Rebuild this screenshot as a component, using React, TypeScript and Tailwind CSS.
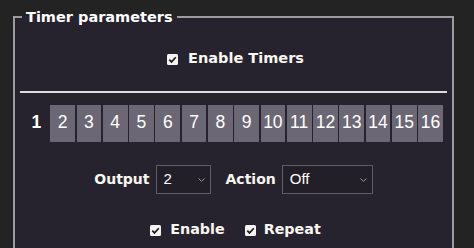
import React from "react";

const tabs = Array.from({ length: 16 }, (_, i) => i + 1);

const Check = () => (
  <svg width="11" height="11" viewBox="0 0 11 11" className="shrink-0">
    <rect x="0" y="0" width="11" height="11" rx="1.5" fill="#f4f4f4" />
    <path d="M2.3 5.6 L4.5 7.9 L8.8 3.2" fill="none" stroke="#1e1e1e" strokeWidth="1.7" />
  </svg>
);

const Chevron = () => (
  <svg width="7" height="4" viewBox="0 0 7 4">
    <path d="M0.5 0.5 L3.5 3.3 L6.5 0.5" fill="none" stroke="#9a96a0" strokeWidth="1" />
  </svg>
);

const Select = ({ value, width }: { value: string; width: string }) => (
  <div
    className={`${width} h-[29px] flex items-center justify-between border border-[#5e5e64] bg-[#231f29] pl-[7px] pr-[5px] text-[15px] font-normal text-white`}
    style={{ fontFamily: '"Liberation Sans", Arial, sans-serif' }}
  >
    <span>{value}</span>
    <Chevron />
  </div>
);

export default function App() {
  return (
    <div
      className="h-[248px] overflow-hidden bg-[#232323] pt-[6px] text-[#f8f6f0]"
      style={{ fontFamily: '"DejaVu Sans", Verdana, sans-serif' }}
    >
      <fieldset className="ml-[13px] mr-[20px] h-[300px] border-2 border-[#9c9c9c] bg-[#27232e] px-[5px]">
        <legend className="ml-[2px] px-[4px] text-[14.5px] font-bold leading-[22px] text-white">
          Timer parameters
        </legend>

        <div className="mt-[20px] flex h-[22px] items-center justify-center gap-[10px] pl-[4px] text-[14.5px] font-bold">
          <Check />
          <span>Enable Timers</span>
        </div>

        <hr className="mt-[21px] border-0 border-t-2 border-[#dcdcdc]" />

        <div
          className="mx-auto mt-[12px] flex w-[419px] gap-[1.6px]"
          style={{ fontFamily: '"Liberation Sans", Arial, sans-serif' }}
        >
          {tabs.map((n) => (
            <div
              key={n}
              className={
                n === 1
                  ? "flex h-[37px] flex-1 items-center justify-center pb-[2px] text-[17.5px] font-bold text-white"
                  : "flex h-[37px] flex-1 items-center justify-center bg-[#6c6775] pb-[2px] text-[17.5px] text-white"
              }
            >
              {n}
            </div>
          ))}
        </div>

        <div className="mt-[23px] flex items-center justify-center text-[14px] font-bold">
          <span>Output</span>
          <div className="ml-[6px]">
            <Select value="2" width="w-[55px]" />
          </div>
          <span className="ml-[15px]">Action</span>
          <div className="ml-[6px]">
            <Select value="Off" width="w-[91px]" />
          </div>
        </div>

        <div className="mt-[26px] flex h-[20px] items-center justify-center pl-[4px] text-[14.3px] font-bold">
          <Check />
          <span className="ml-[9px]">Enable</span>
          <span className="ml-[20px]">
            <Check />
          </span>
          <span className="ml-[8px]">Repeat</span>
        </div>
      </fieldset>
    </div>
  );
}
